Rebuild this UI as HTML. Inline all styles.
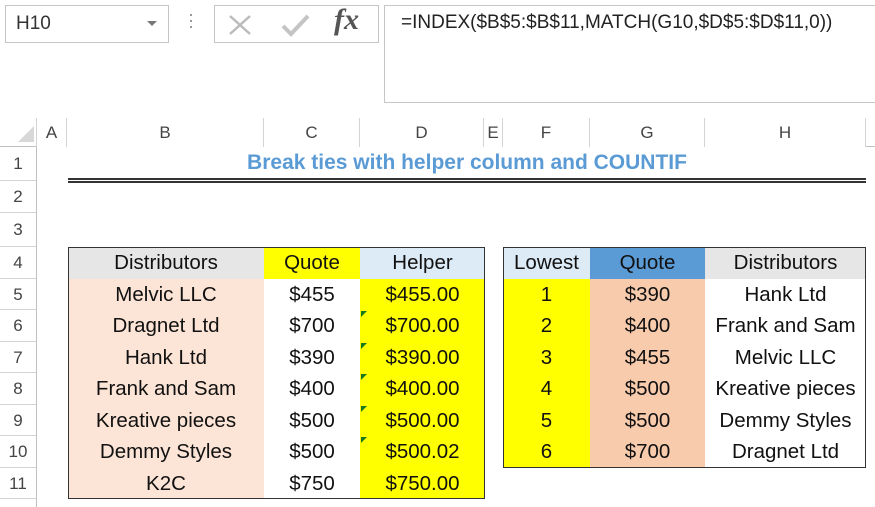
<!DOCTYPE html>
<html><head><meta charset="utf-8">
<style>
*{margin:0;padding:0;box-sizing:border-box}
body{width:875px;height:507px;background:#fff;position:relative;overflow:hidden;font-family:"Liberation Sans",sans-serif;color:#222}
.a{position:absolute}
.box{position:absolute;border:1px solid #c6c6c6;background:#fff}
.ch{position:absolute;top:118px;height:29px;border-right:1px solid #d4d4d4;text-align:center;font-size:17px;line-height:29px;color:#444;background:#fff}
.rh{position:absolute;left:0;width:36px;border-bottom:1px solid #d4d4d4;text-align:center;font-size:17px;color:#444}
.c{position:absolute;text-align:center;font-size:20.5px;color:#111;height:31.5px;line-height:31.5px;white-space:nowrap}
.tri{position:absolute;width:0;height:0;border-top:6px solid #1a7a1a;border-right:6px solid transparent}
</style></head><body>
<!-- formula bar -->
<div class="box" style="left:5px;top:5px;width:164px;height:38px"></div>
<div class="a" style="left:16px;top:13px;font-size:19px;color:#333">H10</div>
<div class="a" style="left:147px;top:21px;width:0;height:0;border-left:5px solid transparent;border-right:5px solid transparent;border-top:5px solid #777"></div>
<div class="a" style="left:190px;top:14px;width:2px;height:2px;background:#999;box-shadow:0 6px 0 #999,0 12px 0 #999"></div>
<div class="box" style="left:214px;top:5px;width:165px;height:38px"></div>
<svg class="a" style="left:226px;top:12px" width="30" height="26"><path d="M4 4L24 22M24 4L4 22" stroke="#bbb" stroke-width="2.5"/></svg>
<svg class="a" style="left:280px;top:12px" width="32" height="26"><path d="M3 14L11 22L28 4" stroke="#c4c4c4" stroke-width="4" fill="none"/></svg>
<div class="a" style="left:334px;top:3px;font-family:'Liberation Serif',serif;font-style:italic;font-weight:bold;font-size:30px;color:#555">fx</div>
<div class="box" style="left:384px;top:5px;width:495px;height:98px"></div>
<div class="a" style="left:401px;top:12px;font-size:19px;color:#222">=INDEX($B$5:$B$11,MATCH(G10,$D$5:$D$11,0))</div>
<!-- column headers -->
<div class="a" style="left:0;top:118px;width:875px;height:29px;border-bottom:1px solid #c0c0c0"></div>
<div class="a" style="left:18px;top:126px;width:0;height:0;border-left:16px solid transparent;border-bottom:16px solid #d8d8d8"></div>
<div class="ch" style="left:36px;width:31px;border-left:1px solid #d4d4d4">A</div>
<div class="ch" style="left:67px;width:197px">B</div>
<div class="ch" style="left:264px;width:96px">C</div>
<div class="ch" style="left:360px;width:124px">D</div>
<div class="ch" style="left:484px;width:19px">E</div>
<div class="ch" style="left:503px;width:87px">F</div>
<div class="ch" style="left:590px;width:115px">G</div>
<div class="ch" style="left:705px;width:161px">H</div>
<!-- row headers -->
<div class="a" style="left:36px;top:147px;width:1px;height:360px;background:#c0c0c0"></div>
<div class="rh" style="top:147px;height:34px;line-height:34px">1</div>
<div class="rh" style="top:181px;height:32px;line-height:32px">2</div>
<div class="rh" style="top:213px;height:34px;line-height:34px">3</div>
<div class="rh" style="top:247px;height:31.5px;line-height:31.5px">4</div>
<div class="rh" style="top:278.5px;height:31.5px;line-height:31.5px">5</div>
<div class="rh" style="top:310px;height:31.5px;line-height:31.5px">6</div>
<div class="rh" style="top:341.5px;height:31.5px;line-height:31.5px">7</div>
<div class="rh" style="top:373px;height:31.5px;line-height:31.5px">8</div>
<div class="rh" style="top:404.5px;height:31.5px;line-height:31.5px">9</div>
<div class="rh" style="top:436px;height:31.5px;line-height:31.5px">10</div>
<div class="rh" style="top:467.5px;height:31.5px;line-height:31.5px">11</div>
<!-- title -->
<div class="a" style="left:68px;top:151px;width:798px;text-align:center;font-size:21px;font-weight:bold;color:#5b9bd5">Break ties with helper column and COUNTIF</div>
<div class="a" style="left:68px;top:178px;width:798px;height:5px;border-top:2px solid #333;border-bottom:2px solid #333"></div>
<!-- table 1 -->
<div class="a" style="left:68px;top:247px;width:196px;height:252px;background:#fce4d6"></div>
<div class="a" style="left:68px;top:247px;width:196px;height:31.5px;background:#e7e6e6"></div>
<div class="a" style="left:264px;top:247px;width:96px;height:31.5px;background:#ffff00"></div>
<div class="a" style="left:360px;top:247px;width:125px;height:252px;background:#ffff00"></div>
<div class="a" style="left:360px;top:247px;width:125px;height:31.5px;background:#ddebf7"></div>
<div class="a" style="left:68px;top:247px;width:417px;height:252px;border:1.5px solid #333"></div>
<div class="c" style="left:68px;top:247px;width:196px">Distributors</div>
<div class="c" style="left:264px;top:247px;width:96px">Quote</div>
<div class="c" style="left:360px;top:247px;width:125px">Helper</div>
<div class="c" style="left:68px;top:278.5px;width:196px">Melvic LLC</div>
<div class="c" style="left:68px;top:310px;width:196px">Dragnet Ltd</div>
<div class="c" style="left:68px;top:341.5px;width:196px">Hank Ltd</div>
<div class="c" style="left:68px;top:373px;width:196px">Frank and Sam</div>
<div class="c" style="left:68px;top:404.5px;width:196px">Kreative pieces</div>
<div class="c" style="left:68px;top:436px;width:196px">Demmy Styles</div>
<div class="c" style="left:68px;top:467.5px;width:196px">K2C</div>
<div class="c" style="left:264px;top:278.5px;width:96px">$455</div>
<div class="c" style="left:264px;top:310px;width:96px">$700</div>
<div class="c" style="left:264px;top:341.5px;width:96px">$390</div>
<div class="c" style="left:264px;top:373px;width:96px">$400</div>
<div class="c" style="left:264px;top:404.5px;width:96px">$500</div>
<div class="c" style="left:264px;top:436px;width:96px">$500</div>
<div class="c" style="left:264px;top:467.5px;width:96px">$750</div>
<div class="c" style="left:360px;top:278.5px;width:125px">$455.00</div>
<div class="c" style="left:360px;top:310px;width:125px">$700.00</div>
<div class="c" style="left:360px;top:341.5px;width:125px">$390.00</div>
<div class="c" style="left:360px;top:373px;width:125px">$400.00</div>
<div class="c" style="left:360px;top:404.5px;width:125px">$500.00</div>
<div class="c" style="left:360px;top:436px;width:125px">$500.02</div>
<div class="c" style="left:360px;top:467.5px;width:125px">$750.00</div>
<div class="tri" style="left:361px;top:311px"></div>
<div class="tri" style="left:361px;top:342.5px"></div>
<div class="tri" style="left:361px;top:374px"></div>
<div class="tri" style="left:361px;top:405.5px"></div>
<div class="tri" style="left:361px;top:437px"></div>
<!-- table 2 -->
<div class="a" style="left:503px;top:247px;width:87px;height:220px;background:#ffff00"></div>
<div class="a" style="left:503px;top:247px;width:87px;height:31.5px;background:#ddebf7"></div>
<div class="a" style="left:590px;top:247px;width:115px;height:220px;background:#f8cbad"></div>
<div class="a" style="left:590px;top:247px;width:115px;height:31.5px;background:#5b9bd5"></div>
<div class="a" style="left:705px;top:247px;width:161px;height:31.5px;background:#e7e6e6"></div>
<div class="a" style="left:503px;top:247px;width:363px;height:220.5px;border:1.5px solid #333"></div>
<div class="c" style="left:503px;top:247px;width:87px">Lowest</div>
<div class="c" style="left:590px;top:247px;width:115px">Quote</div>
<div class="c" style="left:705px;top:247px;width:161px">Distributors</div>
<div class="c" style="left:503px;top:278.5px;width:87px">1</div>
<div class="c" style="left:503px;top:310px;width:87px">2</div>
<div class="c" style="left:503px;top:341.5px;width:87px">3</div>
<div class="c" style="left:503px;top:373px;width:87px">4</div>
<div class="c" style="left:503px;top:404.5px;width:87px">5</div>
<div class="c" style="left:503px;top:436px;width:87px">6</div>
<div class="c" style="left:590px;top:278.5px;width:115px">$390</div>
<div class="c" style="left:590px;top:310px;width:115px">$400</div>
<div class="c" style="left:590px;top:341.5px;width:115px">$455</div>
<div class="c" style="left:590px;top:373px;width:115px">$500</div>
<div class="c" style="left:590px;top:404.5px;width:115px">$500</div>
<div class="c" style="left:590px;top:436px;width:115px">$700</div>
<div class="c" style="left:705px;top:278.5px;width:161px">Hank Ltd</div>
<div class="c" style="left:705px;top:310px;width:161px">Frank and Sam</div>
<div class="c" style="left:705px;top:341.5px;width:161px">Melvic LLC</div>
<div class="c" style="left:705px;top:373px;width:161px">Kreative pieces</div>
<div class="c" style="left:705px;top:404.5px;width:161px">Demmy Styles</div>
<div class="c" style="left:705px;top:436px;width:161px">Dragnet Ltd</div>
</body></html>
